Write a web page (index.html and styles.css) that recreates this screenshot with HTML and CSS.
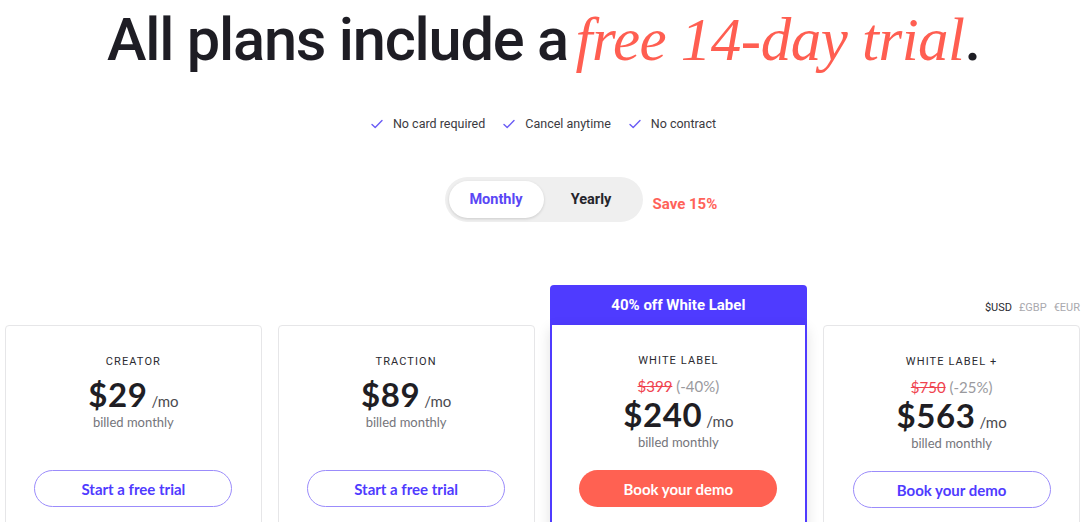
FILE: index.html
```html
<!DOCTYPE html>
<html>
<head>
<meta charset="utf-8">
<link rel="stylesheet" href="styles.css">
</head>
<body>
<div class="page">
  <h1 class="headline">All plans include a <em class="accent">free 14-day trial</em>.</h1>

  <ul class="perks">
    <li class="perk"><svg class="check" viewBox="0 0 12 10" width="12" height="10"><polyline points="1,5.5 4.2,8.5 11,1.5" fill="none" stroke="#6a5cf5" stroke-width="1.4" stroke-linecap="round" stroke-linejoin="round"/></svg>No card required</li>
    <li class="perk"><svg class="check" viewBox="0 0 12 10" width="12" height="10"><polyline points="1,5.5 4.2,8.5 11,1.5" fill="none" stroke="#6a5cf5" stroke-width="1.4" stroke-linecap="round" stroke-linejoin="round"/></svg>Cancel anytime</li>
    <li class="perk"><svg class="check" viewBox="0 0 12 10" width="12" height="10"><polyline points="1,5.5 4.2,8.5 11,1.5" fill="none" stroke="#6a5cf5" stroke-width="1.4" stroke-linecap="round" stroke-linejoin="round"/></svg>No contract</li>
  </ul>

  <div class="billing">
    <div class="billing-spacer"></div>
    <div class="toggle">
      <button class="toggle-btn is-active">Monthly</button>
      <button class="toggle-btn">Yearly</button>
    </div>
    <div class="save">Save 15%</div>
  </div>

  <div class="plans">
    <div class="promo">40% off White Label</div>
    <div class="currency"><span class="cur is-active">$USD</span><span class="cur">£GBP</span><span class="cur">€EUR</span></div>

    <div class="card">
      <div class="plan-head">
        <div class="plan-name">CREATOR</div>
        <div class="price"><span class="amount">$29</span><span class="per">/mo</span></div>
        <div class="billed">billed monthly</div>
      </div>
      <button class="cta cta-outline">Start a free trial</button>
    </div>

    <div class="card">
      <div class="plan-head">
        <div class="plan-name">TRACTION</div>
        <div class="price"><span class="amount">$89</span><span class="per">/mo</span></div>
        <div class="billed">billed monthly</div>
      </div>
      <button class="cta cta-outline">Start a free trial</button>
    </div>

    <div class="card card-featured">
      <div class="plan-head">
        <div class="plan-name">WHITE LABEL</div>
        <div class="was"><s class="old">$399</s> (-40%)</div>
        <div class="price"><span class="amount">$240</span><span class="per">/mo</span></div>
        <div class="billed">billed monthly</div>
      </div>
      <button class="cta cta-solid">Book your demo</button>
    </div>

    <div class="card">
      <div class="plan-head">
        <div class="plan-name">WHITE LABEL +</div>
        <div class="was"><s class="old">$750</s> (-25%)</div>
        <div class="price"><span class="amount">$563</span><span class="per">/mo</span></div>
        <div class="billed">billed monthly</div>
      </div>
      <button class="cta cta-outline">Book your demo</button>
    </div>
  </div>
</div>
</body>
</html>
```
FILE: styles.css
```css
* { box-sizing: border-box; }

html, body {
  margin: 0;
  padding: 0;
  background: #ffffff;
}

body {
  font-family: Roboto, "Liberation Sans", sans-serif;
  color: #1f1e24;
}

.page {
  width: 1087px;
  overflow: hidden;
}

.headline {
  margin: 0;
  padding-top: 5px;
  text-align: center;
  font-family: Roboto, "Liberation Sans", sans-serif;
  font-weight: 500;
  font-size: 59.5px;
  line-height: 70px;
  letter-spacing: -1.2px;
  color: #1e1d24;
}

.accent {
  font-family: "Liberation Serif", serif;
  font-style: italic;
  font-weight: 400;
  font-size: 61px;
  letter-spacing: -0.5px;
  color: #ff5e51;
  margin-left: -6px;
  margin-right: 0;
}

.perks {
  list-style: none;
  margin: 40px 0 0;
  padding: 0;
  display: flex;
  justify-content: center;
  gap: 18px;
  font-family: Roboto, "Liberation Sans", sans-serif;
  font-size: 12.5px;
  line-height: 18px;
  color: #3b3a41;
}

.perk {
  display: flex;
  align-items: center;
  gap: 10px;
}

.check { display: block; }

.billing {
  margin-top: 44px;
  display: grid;
  grid-template-columns: 1fr auto 1fr;
  align-items: center;
  column-gap: 10px;
}

.toggle {
  display: flex;
  background: #efefef;
  border-radius: 23px;
  padding: 4px;
  height: 45px;
  width: 198px;
}

.toggle-btn {
  width: 95px;
  height: 37px;
  border: 0;
  border-radius: 19px;
  background: transparent;
  font-family: Roboto, "Liberation Sans", sans-serif;
  font-weight: 700;
  font-size: 14.5px;
  color: #26252b;
  padding: 0;
}

.toggle-btn.is-active {
  background: #ffffff;
  color: #5a47f5;
  box-shadow: 0 1px 3px rgba(0, 0, 0, 0.15);
}

.save {
  font-family: Roboto, "Liberation Sans", sans-serif;
  font-weight: 700;
  font-size: 15px;
  color: #ff6259;
  padding-top: 9px;
}

.plans {
  margin: 63px 7px 0 5px;
  display: grid;
  grid-template-columns: repeat(4, 1fr);
  grid-template-rows: 40px auto;
  column-gap: 16px;
}

.promo {
  grid-column: 3;
  grid-row: 1;
  background: #4f3bff;
  color: #ffffff;
  border-radius: 4px 4px 0 0;
  display: flex;
  align-items: center;
  justify-content: center;
  font-family: Roboto, "Liberation Sans", sans-serif;
  font-weight: 700;
  font-size: 15px;
  margin-left: -1px;
}

.currency {
  grid-column: 4;
  grid-row: 1;
  display: flex;
  justify-content: flex-end;
  align-items: flex-start;
  gap: 7px;
  padding-top: 16px;
  font-family: Roboto, "Liberation Sans", sans-serif;
  font-size: 11px;
  color: #a9a9ae;
}

.cur.is-active { color: #2a292f; }

.card {
  grid-row: 2;
  border: 1px solid #e6e6e8;
  border-radius: 4px;
  background: #ffffff;
  padding: 28px 0 40px;
  display: flex;
  flex-direction: column;
  align-items: center;
  font-family: Lato, "Open Sans", sans-serif;
}

.card-featured {
  border: 2px solid #4f3bff;
  border-top: 0;
  border-radius: 0 0 4px 4px;
  margin-left: -1px;
  box-shadow: 0 4px 14px rgba(0, 0, 0, 0.12);
}

.plan-head {
  min-height: 96px;
  display: flex;
  flex-direction: column;
  align-items: center;
}

.plan-name {
  font-size: 11px;
  line-height: 16px;
  letter-spacing: 1.1px;
  color: #2b2a30;
  font-family: Roboto, "Liberation Sans", sans-serif;
}

.was {
  margin-top: 8px;
  font-size: 15px;
  line-height: 18px;
  color: #9a9a9e;
}

.old { color: #f0434f; }

.price {
  font-size: 33px;
  font-weight: 700;
  line-height: 36px;
  text-align: center;
}

.plan-name + .price { margin-top: 6px; }
.was + .price { margin-top: 1px; }

.amount {
  color: #1f1e24;
  letter-spacing: 0.6px;
}

.per {
  margin-left: 4px;
  font-size: 15px;
  font-weight: 400;
  line-height: 1;
  color: #4a4a50;
}

.billed {
  margin-top: 2px;
  font-size: 13px;
  line-height: 16px;
  color: #75757b;
}

.cta {
  margin-top: 20px;
  width: 198px;
  height: 37px;
  border-radius: 19px;
  font-family: Lato, "Open Sans", sans-serif;
  font-weight: 700;
  font-size: 15px;
  padding: 0;
}

.cta-outline {
  background: #ffffff;
  border: 1px solid #9b8cfb;
  color: #4f3bff;
}

.cta-solid {
  background: #ff6152;
  border: 0;
  color: #ffffff;
}
```
